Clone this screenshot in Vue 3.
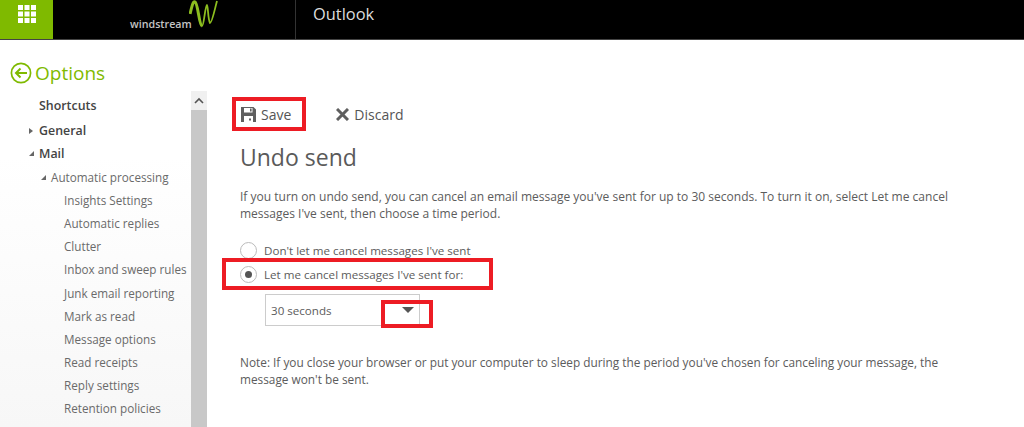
<script setup>
const items = [
  'Insights Settings',
  'Automatic replies',
  'Clutter',
  'Inbox and sweep rules',
  'Junk email reporting',
  'Mark as read',
  'Message options',
  'Read receipts',
  'Reply settings',
  'Retention policies',
]
</script>

<template>
  <div class="page">
    <header class="topbar">
      <div class="tile">
        <svg width="18" height="18" viewBox="0 0 18 18" fill="#fff">
          <rect v-for="c in 9" :key="c" :x="(c - 1) % 3 * 6.5" :y="Math.floor((c - 1) / 3) * 6.5" width="5" height="5" />
        </svg>
      </div>
      <div class="brand">
        <span class="brand-name">windstream</span>
        <svg class="brand-wave" width="30" height="28" viewBox="0 0 30 28" fill="none" stroke="#8cbd1f">
          <path d="M1 14 C3 6 4 1 6 2 C9 3 10 25 13 26" stroke-width="3" />
          <path d="M13 26 C15 26 16 6 18 5 C19 5 19 20 21 23 C23 23 26 8 28 1" stroke-width="1.8" />
        </svg>
      </div>
      <div class="app-name">Outlook</div>
    </header>

    <div class="body">
      <aside class="side">
        <div class="side-title">
          <svg width="22" height="22" viewBox="0 0 22 22" fill="none" stroke="#7fba00" stroke-width="1.7">
            <circle cx="11" cy="11" r="9.6" />
            <path d="M17 11H6M10.5 6.5 6 11l4.5 4.5" stroke-width="2" />
          </svg>
          <span>Options</span>
        </div>
        <div class="side-lower">
          <nav class="tree">
            <div class="row top">Shortcuts</div>
            <div class="row top">
              <i class="arrow closed"></i>General
            </div>
            <div class="row top">
              <i class="arrow open"></i>Mail
            </div>
            <div class="row sub">
              <i class="arrow open"></i>Automatic processing
            </div>
            <div v-for="item in items" :key="item" class="row leaf">{{ item }}</div>
          </nav>
          <div class="scrollbar">
            <div class="scroll-up">
              <svg width="10" height="7" viewBox="0 0 10 7" fill="none" stroke="#555" stroke-width="1.6">
                <path d="M1 6 5 2l4 4" />
              </svg>
            </div>
            <div class="scroll-thumb"></div>
          </div>
        </div>
      </aside>

      <main class="main">
        <div class="actions">
          <button class="action">
            <svg width="15" height="15" viewBox="0 0 15 15" fill="#5f5f5f">
              <path d="M0 0h12.5L15 2.5V15H0ZM3 1v4.5h8.5V1ZM3 9v6h9V9ZM9 1.6h1.6v3H9ZM8 11.5h2v2H8Z" fill-rule="evenodd" />
            </svg>
            Save
          </button>
          <button class="action">
            <svg width="13" height="13" viewBox="0 0 13 13" fill="none" stroke="#5f5f5f" stroke-width="3">
              <path d="M1 1l11 11M12 1 1 12" />
            </svg>
            Discard
          </button>
        </div>
        <h1>Undo send</h1>
        <p class="intro">If you turn on undo send, you can cancel an email message you've sent for up to 30 seconds. To turn it on, select Let me cancel messages I've sent, then choose a time period.</p>
        <div class="choices">
          <label class="choice"><span class="radio"></span>Don't let me cancel messages I've sent</label>
          <label class="choice"><span class="radio on"></span>Let me cancel messages I've sent for:</label>
        </div>
        <div class="select">
          <span>30 seconds</span>
          <i class="caret"></i>
        </div>
        <p class="note">Note: If you close your browser or put your computer to sleep during the period you've chosen for canceling your message, the message won't be sent.</p>
        <div class="mark mark-save"></div>
        <div class="mark mark-radio"></div>
        <div class="mark mark-caret"></div>
      </main>
    </div>
  </div>
</template>

<style scoped>
.page {
  width: 1024px;
  height: 427px;
  overflow: hidden;
  background: #fff;
  font-family: "Open Sans", "Noto Sans", sans-serif;
  color: #666;
}

.topbar {
  display: flex;
  height: 40px;
  box-sizing: border-box;
  border-bottom: 1px solid #444;
  background: #000;
  color: #ddd;
}

.tile {
  width: 53px;
  background: #7fba00;
  display: flex;
  justify-content: center;
  padding-top: 5px;
  box-sizing: border-box;
}

.brand {
  width: 243px;
  border-right: 1px solid #333;
  display: flex;
  align-items: flex-start;
  padding-left: 77px;
  box-sizing: border-box;
}

.brand-name {
  margin-top: 17px;
  font-size: 10.7px;
  font-weight: 600;
  color: #c4c4c4;
}

.brand-wave {
  margin-left: -3px;
}

.app-name {
  margin-left: 17px;
  font-size: 16.4px;
  line-height: 27px;
}

.body {
  display: flex;
}

.side {
  width: 207px;
  flex-shrink: 0;
  background: linear-gradient(#fff 30%, #f7f7f7);
  height: 387px;
}

.side-title {
  display: flex;
  align-items: center;
  gap: 3px;
  padding: 19px 0 4px 10px;
  height: 28px;
  color: #7fba00;
  font-size: 19px;
}

.side-lower {
  display: flex;
}

.tree {
  width: 184px;
  padding-top: 3px;
  flex-shrink: 0;
  font-size: 11.7px;
  white-space: nowrap;
  color: #6a6a6a;
}

.row {
  height: 23.2px;
  line-height: 23px;
  position: relative;
}

.top {
  padding-left: 39px;
  font-size: 12.4px;
  font-weight: 600;
  color: #444;
}

.top:first-child {
  margin-bottom: 2px;
}

.sub {
  padding-left: 51px;
}

.leaf {
  padding-left: 64px;
}

.arrow {
  position: absolute;
  top: 9px;
  margin-left: -10px;
}

.arrow.closed {
  width: 0;
  height: 0;
  border-left: 4px solid #666;
  border-top: 3.5px solid transparent;
  border-bottom: 3.5px solid transparent;
}

.arrow.open {
  width: 0;
  height: 0;
  border-bottom: 5px solid #666;
  border-left: 5px solid transparent;
}

.scrollbar {
  width: 16px;
  margin-left: 7px;
  display: flex;
  flex-direction: column;
  height: 336px;
  background: #f0f0f0;
}

.scroll-up {
  height: 19px;
  background: #f0f0f0;
  display: flex;
  align-items: center;
  justify-content: center;
}

.scroll-thumb {
  flex: 1;
  background: #c8c8c8;
}

.main {
  position: relative;
  flex: 1;
  padding: 0 0 0 33px;
}

.actions {
  display: flex;
  gap: 45px;
  padding: 64px 0 0 1px;
  height: 21px;
}

.action {
  display: flex;
  align-items: center;
  gap: 5px;
  height: 21px;
  padding: 0;
  border: 0;
  background: none;
  font: inherit;
  font-size: 14px;
  color: #555;
}

h1 {
  margin: 17px 0 0;
  font-size: 23px;
  font-weight: 400;
  line-height: 30px;
  color: #5a5a5a;
}

.intro,
.note {
  margin: 0;
  width: 720px;
  line-height: 17px;
  color: #5c5c5c;
}

.intro {
  margin-top: 16px;
  font-size: 12.03px;
}

.note {
  margin-top: 28px;
  font-size: 11.83px;
}

.choices {
  margin-top: 16px;
}

.choice {
  display: flex;
  align-items: center;
  height: 24px;
  gap: 7px;
  font-size: 11.6px;
  color: #5c5c5c;
}

.radio {
  width: 15px;
  height: 15px;
  border: 1px solid #bbb;
  border-radius: 50%;
  background: #fff;
  display: flex;
  align-items: center;
  justify-content: center;
}

.radio.on::after {
  content: "";
  width: 7px;
  height: 7px;
  border-radius: 50%;
  background: #555;
}

.select {
  display: flex;
  align-items: center;
  justify-content: space-between;
  box-sizing: border-box;
  width: 155px;
  height: 32px;
  margin: 8px 0 0 25px;
  padding: 0 5px;
  border: 1px solid #ccc;
  font-size: 11.6px;
  color: #5c5c5c;
}

.caret {
  border-top: 6px solid #555;
  border-left: 6px solid transparent;
  border-right: 6px solid transparent;
}

.mark {
  position: absolute;
  box-sizing: border-box;
  border: 4px solid #ed1c24;
}

.mark-save {
  left: 25px;
  top: 57px;
  width: 74px;
  height: 34px;
}

.mark-radio {
  left: 15px;
  top: 218px;
  width: 271px;
  height: 32px;
}

.mark-caret {
  left: 174px;
  top: 260px;
  width: 52px;
  height: 28px;
}
</style>

<style>
html,
body {
  background: #fff;
}
</style>
